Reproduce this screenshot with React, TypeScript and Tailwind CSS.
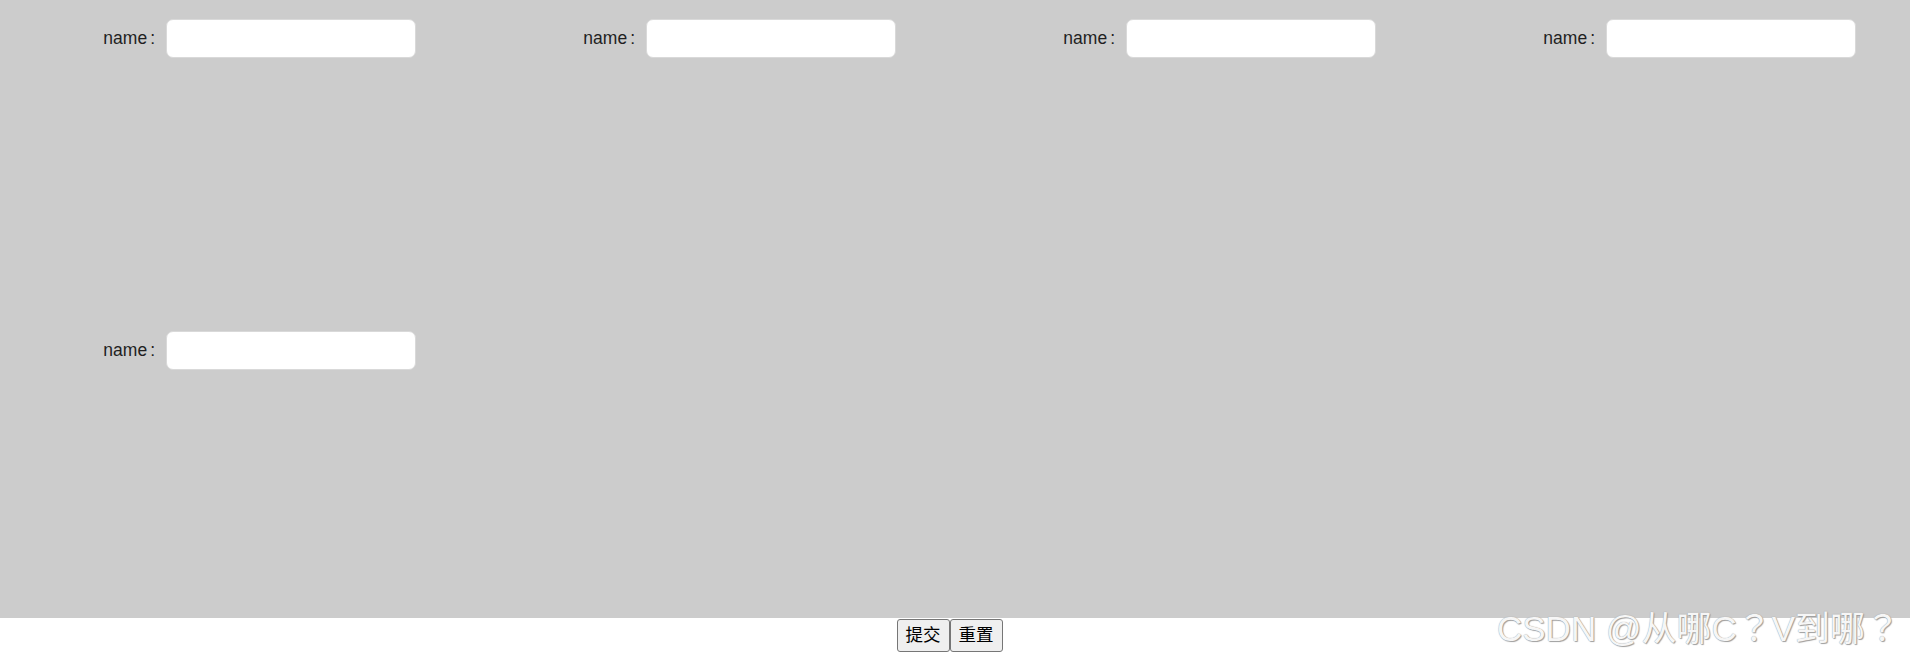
const fields = ["a", "b", "c", "d", "e"];

function Field() {
  return (
    <div className="flex items-center">
      <label className="flex w-[166px] justify-end text-[17.5px] text-[#1f1f1f]">
        name
        <span className="ml-[3px] mr-[11px]">:</span>
      </label>
      <input
        type="text"
        className="h-[39px] w-[250px] rounded-[7px] border border-[#d9d9d9] bg-white px-[14px] text-[17.5px] outline-none"
      />
    </div>
  );
}

// fullwidth question mark, centred in its cell as in the reference
function Q() {
  return (
    <span className="inline-block w-[1em] text-center font-['Noto_Sans_CJK_JP',sans-serif]">
      ？
    </span>
  );
}

export default function App() {
  return (
    <div
      className="relative h-[660px] w-full overflow-hidden bg-white"
      style={{ fontFamily: '"Liberation Sans", "Noto Sans CJK SC", sans-serif' }}
    >
      {/* Form area */}
      <div className="grid h-[618px] grid-cols-[repeat(4,480px)] content-start gap-y-[273px] bg-[#cccccc] pt-[19px]">
        {fields.map((f) => (
          <Field key={f} />
        ))}
      </div>

      {/* Actions */}
      <div className="flex w-[1899px] justify-center pt-[1px]">
        <button className="h-[33px] rounded-[3px] border border-[#767676] bg-[#efefef] px-[8px] text-[17.5px] leading-none text-black">
          提交
        </button>
        <button className="h-[33px] rounded-[3px] border border-[#767676] bg-[#efefef] px-[8px] text-[17.5px] leading-none text-black">
          重置
        </button>
      </div>

      {/* Watermark */}
      <div className="absolute left-[1497px] top-[608px] text-[35px] leading-[35px] whitespace-nowrap text-[#f6f6f6] [text-shadow:0_0_1px_#8a8a8a,1px_1px_1px_#a0a0a0]">
        CSDN @从哪C<Q />V到哪<Q />
      </div>
    </div>
  );
}
